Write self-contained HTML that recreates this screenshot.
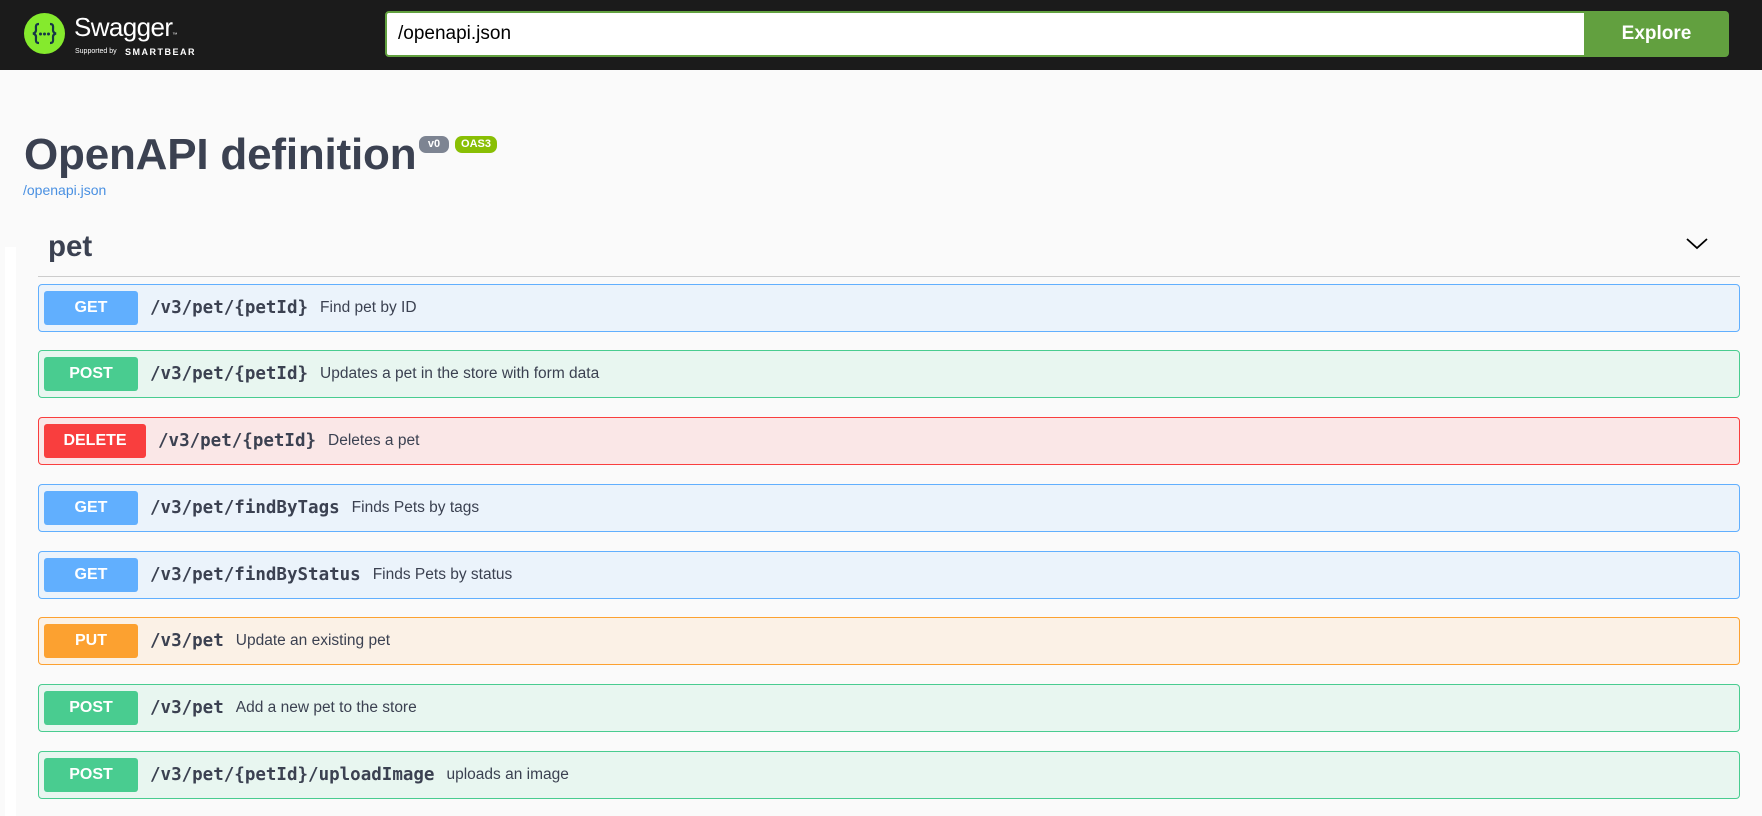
<!DOCTYPE html>
<html><head><meta charset="utf-8"><style>
*{margin:0;padding:0;box-sizing:border-box}
body{width:1762px;height:816px;overflow:hidden;background:#fafafa;font-family:"Liberation Sans",Arial,sans-serif;color:#3b4151;position:relative}
.hdr{position:absolute;left:0;top:0;width:1762px;height:70px;background:#1b1b1b}
.logo{position:absolute;left:24px;top:13px;width:41px;height:41px;border-radius:50%;background:#85ea2d}
.sw{position:absolute;left:74px;top:12px;font-size:26px;color:#fff;letter-spacing:-0.6px}
.sup{position:absolute;left:75px;top:48px;font-size:7px;color:#fff}
.sb{position:absolute;left:125px;top:47px;font-size:9px;color:#fff;letter-spacing:1.5px;font-weight:bold}
.inp{position:absolute;left:385px;top:11px;width:1205px;height:46px;border:2px solid #62a03f;border-radius:4px 0 0 4px;background:#fff;font-size:19px;padding:10px 0 0 11px;color:#000}
.exp{position:absolute;left:1584px;top:11px;width:145px;height:46px;background:#62a03f;border-radius:0 4px 4px 0;color:#fff;font-weight:bold;font-size:19px;text-align:center;line-height:46px}
h1{position:absolute;left:24px;top:130px;font-size:44px;font-weight:bold;color:#3b4151;letter-spacing:-0.2px}
.b{position:absolute;top:136px;height:17px;border-radius:7px;color:#fff;font-size:11px;font-weight:bold;text-align:center;line-height:17px}
.lnk{position:absolute;left:23px;top:182px;font-size:14px;color:#4990e2}
.strip{position:absolute;left:5px;top:247px;width:11px;height:569px;background:#fff}
.pet{position:absolute;left:48px;top:230px;font-size:29.5px;font-weight:bold}
.line{position:absolute;left:38px;top:276px;width:1702px;height:1px;background:#ccc}
.row{position:absolute;left:38px;width:1702px;height:48px;border:1px solid;border-radius:4px;display:flex;align-items:center;padding-left:5px}
.m{width:94px;height:34px;border-radius:3px;color:#fff;font-weight:bold;font-size:16px;text-align:center;line-height:34px;flex:none}
.p{margin-left:12px;font-family:"DejaVu Sans Mono","Liberation Mono",monospace;font-weight:bold;font-size:17.5px;color:#3b4151;white-space:nowrap}
.d{margin-left:12px;font-size:15.5px;color:#3b4151;white-space:nowrap}
.get{background:#ebf3fb;border-color:#61affe}.get .m{background:#61affe}
.post{background:#e8f6f0;border-color:#49cc90}.post .m{background:#49cc90}
.del{background:#fae7e7;border-color:#f93e3e}.del .m{background:#f93e3e;width:102px}
.put{background:#fbf1e6;border-color:#fca130}.put .m{background:#fca130}
</style></head><body>
<div class="hdr">
<div class="logo"><svg width="41" height="41" viewBox="0 0 41 41"><path d="M15 11 C11 11 12 14 12 17 C12 19 11 20 9 20.5 C11 21 12 22 12 24 C12 27 11 30 15 30" fill="none" stroke="#173647" stroke-width="2.2"/><path d="M26 11 C30 11 29 14 29 17 C29 19 30 20 32 20.5 C30 21 29 22 29 24 C29 27 30 30 26 30" fill="none" stroke="#173647" stroke-width="2.2"/><circle cx="16.5" cy="21" r="1.5" fill="#173647"/><circle cx="20.5" cy="21" r="1.5" fill="#173647"/><circle cx="24.5" cy="21" r="1.5" fill="#173647"/></svg></div>
<div class="sw">Swagger<span style="font-size:5px">™</span></div>
<div class="sup">Supported by</div><div class="sb">SMARTBEAR</div>
<div class="inp">/openapi.json</div>
<div class="exp">Explore</div>
</div>
<h1>OpenAPI definition</h1>
<div class="b" style="left:419px;width:30px;background:#7d8492">v0</div>
<div class="b" style="left:455px;width:42px;background:#89bf04">OAS3</div>
<div class="lnk">/openapi.json</div>
<div class="strip"></div>
<div class="pet">pet</div>
<svg style="position:absolute;left:1686px;top:237px" width="22" height="14" viewBox="0 0 22 14"><path d="M1 2 L11 11 L21 2" fill="none" stroke="#000" stroke-width="1.8"/></svg>
<div class="line"></div>

<div class="row get" style="top:284px"><div class="m">GET</div><div class="p">/v3/pet/{petId}</div><div class="d">Find pet by ID</div></div>
<div class="row post" style="top:350px"><div class="m">POST</div><div class="p">/v3/pet/{petId}</div><div class="d">Updates a pet in the store with form data</div></div>
<div class="row del" style="top:417px"><div class="m">DELETE</div><div class="p">/v3/pet/{petId}</div><div class="d">Deletes a pet</div></div>
<div class="row get" style="top:484px"><div class="m">GET</div><div class="p">/v3/pet/findByTags</div><div class="d">Finds Pets by tags</div></div>
<div class="row get" style="top:551px"><div class="m">GET</div><div class="p">/v3/pet/findByStatus</div><div class="d">Finds Pets by status</div></div>
<div class="row put" style="top:617px"><div class="m">PUT</div><div class="p">/v3/pet</div><div class="d">Update an existing pet</div></div>
<div class="row post" style="top:684px"><div class="m">POST</div><div class="p">/v3/pet</div><div class="d">Add a new pet to the store</div></div>
<div class="row post" style="top:751px"><div class="m">POST</div><div class="p">/v3/pet/{petId}/uploadImage</div><div class="d">uploads an image</div></div>
</body></html>
